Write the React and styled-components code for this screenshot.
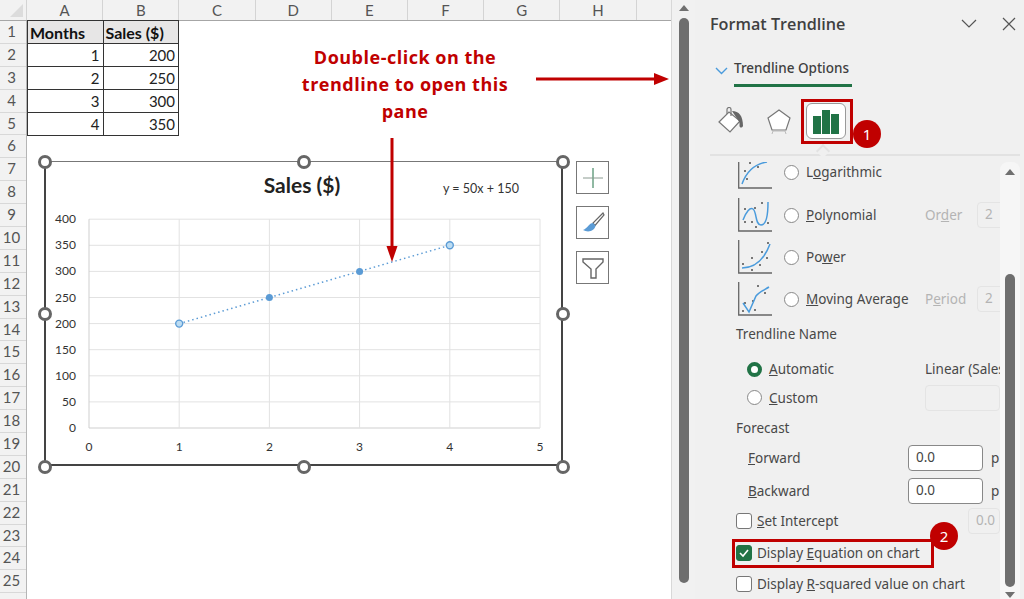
import React from 'react';
import styled, { createGlobalStyle } from 'styled-components';

const GlobalStyle = createGlobalStyle`
  html, body {
    margin: 0;
    padding: 0;
    background: #fff;
    overflow: hidden;
  }
`;

const Page = styled.div`
  display: flex;
  width: 1024px;
  height: 599px;
  overflow: hidden;
`;

/* ---------- sheet ---------- */

const Sheet = styled.div`
  position: relative;
  width: 672px;
  height: 599px;
  flex: none;
  overflow: hidden;
  background: #fff;
  border-right: 1px solid #d8d8d8;
  box-sizing: border-box;
  font-family: Lato, "Liberation Sans", sans-serif;
`;

const ColumnHeader = styled.div`
  display: flex;
  height: 21px;
  background: #f2f2f2;
  border-bottom: 1px solid #a6a6a6;
  box-sizing: border-box;
`;

const Corner = styled.div`
  width: 27px;
  flex: none;
  border-right: 1px solid #d4d4d4;
  box-sizing: border-box;
  position: relative;
  &::after {
    content: '';
    position: absolute;
    right: 3px;
    bottom: 3px;
    border-style: solid;
    border-width: 0 0 13px 13px;
    border-color: transparent transparent #dcdcdc transparent;
  }
`;

const ColumnLabel = styled.div`
  width: 76.2px;
  flex: none;
  box-sizing: border-box;
  border-right: 1px solid #d4d4d4;
  text-align: center;
  font-size: 15px;
  line-height: 20px;
  color: #555;
`;

const SheetBody = styled.div`
  display: flex;
  height: 578px;
`;

const RowHeader = styled.div`
  width: 27px;
  flex: none;
  background: #f2f2f2;
  border-right: 1px solid #b5b5b5;
  box-sizing: border-box;
`;

const RowLabel = styled.div`
  height: 22.9px;
  box-sizing: border-box;
  border-bottom: 1px solid #d8d8d8;
  text-align: center;
  padding-right: 3px;
  font-size: 15px;
  line-height: 21px;
  color: #555;
`;

const DataTable = styled.table`
  border-collapse: collapse;
  table-layout: fixed;
  width: 152px;
  height: 114px;
  align-self: flex-start;
  margin-top: -1px;
  font-size: 15px;
  color: #222;
`;

const HeadCell = styled.th`
  border: 1px solid #333;
  background: #e7e6e6;
  font-weight: 700;
  font-size: 16px;
  text-align: left;
  padding: 0 2px;
  height: 22px;
  color: #111;
`;

const DataCell = styled.td`
  border: 1px solid #333;
  text-align: right;
  padding: 0 3px;
  height: 22px;
`;

const Note = styled.div`
  position: absolute;
  left: 285px;
  top: 44px;
  width: 240px;
  text-align: center;
  font-family: "Open Sans", sans-serif;
  font-weight: 700;
  font-size: 18px;
  letter-spacing: 0.5px;
  line-height: 27px;
  color: #c00000;
`;

const ArrowLayer = styled.svg`
  position: absolute;
  left: 0;
  top: 0;
  pointer-events: none;
`;

/* ---------- chart ---------- */

const ChartFrame = styled.div`
  position: absolute;
  left: 44px;
  top: 161px;
  width: 519px;
  height: 305px;
  box-sizing: border-box;
  background: #fff;
  border: 2px solid #444;
  border-top: 1px solid #777;
`;

const ChartText = styled.text`
  font-family: Lato, "Liberation Sans", sans-serif;
  font-size: ${(p) => p.$size || 12}px;
  font-weight: ${(p) => (p.$bold ? 700 : 400)};
  fill: ${(p) => (p.$bold ? '#222' : '#333')};
  text-anchor: ${(p) => p.$anchor || 'middle'};
`;

const Handle = styled.span`
  position: absolute;
  left: ${(p) => p.$x - 7}px;
  top: ${(p) => p.$y - 7}px;
  width: 14px;
  height: 14px;
  box-sizing: border-box;
  border: 3px solid #666;
  border-radius: 50%;
  background: #fff;
`;

const ChartTools = styled.div`
  position: absolute;
  left: 576px;
  top: 161px;
  display: flex;
  flex-direction: column;
  gap: 12px;
`;

const ToolButton = styled.div`
  width: 33px;
  height: 33px;
  box-sizing: border-box;
  border: 1px solid #777;
  background: #fff;
  display: flex;
  align-items: center;
  justify-content: center;
`;

/* ---------- scrollbars ---------- */

const OuterScroll = styled.div`
  width: 23px;
  flex: none;
  background: #f1f1f1;
  display: flex;
  flex-direction: column;
  align-items: center;
  padding-top: 5px;
  box-sizing: border-box;
`;

const ArrowUp = styled.div`
  width: 0;
  height: 0;
  border-left: 5px solid transparent;
  border-right: 5px solid transparent;
  border-bottom: 6px solid #707070;
`;

const ArrowDown = styled.div`
  width: 0;
  height: 0;
  border-left: 5px solid transparent;
  border-right: 5px solid transparent;
  border-top: 6px solid #707070;
`;

const Thumb = styled.div`
  width: 10px;
  border-radius: 5px;
  background: #6e6e6e;
  height: ${(p) => p.$h}px;
  margin-top: ${(p) => p.$top}px;
  flex: none;
`;

/* ---------- format pane ---------- */

const Pane = styled.div`
  position: relative;
  width: 329px;
  flex: none;
  height: 599px;
  overflow: hidden;
  background: #f0f0f0;
  font-family: "Noto Sans", "Open Sans", sans-serif;
  font-size: 13.5px;
  color: #484848;
  display: flex;
  flex-direction: column;
`;

const PaneHeader = styled.div`
  height: 48px;
  flex: none;
  display: flex;
  align-items: center;
  padding: 0 8px 0 15px;
  gap: 25px;
`;

const PaneTitle = styled.div`
  flex: 1;
  font-family: "Open Sans", sans-serif;
  font-size: 16.2px;
  font-weight: 600;
  color: #404040;
`;

const SectionTab = styled.div`
  height: 40px;
  flex: none;
  display: flex;
  align-items: flex-start;
  padding: 2px 0 0 18px;
  box-sizing: border-box;
  gap: 8px;
`;

const SectionLabel = styled.div`
  width: 118px;
  height: 37px;
  box-sizing: border-box;
  border-bottom: 3px solid #217346;
  font-weight: 500;
  font-size: 13.5px;
  line-height: 36px;
  white-space: nowrap;
  color: #404040;
`;

const IconTabs = styled.div`
  height: 68px;
  flex: none;
  display: flex;
  align-items: center;
  gap: 21px;
  box-sizing: border-box;
  border-bottom: 2px solid #e2e2e2;
  margin: 0 4px 0 15px;
  padding-left: 7px;
  position: relative;
`;

const Notch = styled.span`
  position: absolute;
  left: 108px;
  bottom: -2px;
  width: 10px;
  height: 10px;
  box-sizing: border-box;
  background: #f0f0f0;
  border-left: 2px solid #e2e2e2;
  border-top: 2px solid #e2e2e2;
  transform: rotate(45deg);
  transform-origin: center;
`;

const ActiveTab = styled.div`
  width: 40px;
  height: 36px;
  margin-left: -7px;
  box-sizing: border-box;
  background: #fff;
  border: 1px solid #999;
  border-radius: 6px;
  display: flex;
  align-items: center;
  justify-content: center;
`;

const ScrollArea = styled.div`
  flex: 1;
  display: flex;
  margin-top: 6px;
  min-height: 0;
`;

const Options = styled.div`
  width: 305px;
  flex: none;
  overflow: hidden;
  box-sizing: border-box;
  padding-left: 41px;
`;

const InnerScroll = styled.div`
  width: 20px;
  flex: none;
  background: #f6f6f6;
  border-radius: 8px 8px 0 0;
  display: flex;
  flex-direction: column;
  align-items: center;
  padding-top: 7px;
`;

const Row = styled.div`
  display: flex;
  align-items: center;
  height: ${(p) => p.$h}px;
  white-space: nowrap;
  margin-left: ${(p) => p.$indent || 0}px;
  margin-top: ${(p) => p.$top || 0}px;
`;

const TrendSvg = styled.svg`
  width: 34px;
  height: 34px;
  flex: none;
  margin-left: 2px;
  margin-right: 12px;
`;

const RadioDot = styled.span`
  width: 15px;
  height: 15px;
  box-sizing: border-box;
  flex: none;
  border-radius: 50%;
  background: #fff;
  border: ${(p) => (p.$on ? '4px solid #217346' : '1px solid #888')};
  margin-right: 7px;
`;

const TrendLabel = styled.span`
  width: 119px;
  flex: none;
`;

const Muted = styled.span`
  width: 52px;
  flex: none;
  color: #b4b4b4;
`;

const Spread = styled.span`
  flex: 1;
`;

const FieldBox = styled.span`
  flex: none;
  box-sizing: border-box;
  height: 26px;
  width: ${(p) => p.$w}px;
  border-radius: 4px;
  border: 1px solid ${(p) => (p.$off ? '#e4e4e4' : '#888')};
  background: ${(p) => (p.$off ? '#f0f0f0' : '#fff')};
  color: ${(p) => (p.$off ? '#b4b4b4' : '#444')};
  padding-left: 7px;
  line-height: 23px;
`;

const FieldLabel = styled.span`
  width: 160px;
  flex: none;
`;

const Unit = styled.span`
  margin-left: 8px;
`;

const ClippedValue = styled.span`
  width: 75px;
  overflow: hidden;
`;

const CheckBox = styled.span`
  width: 16px;
  height: 16px;
  flex: none;
  box-sizing: border-box;
  border-radius: 3px;
  border: 1px solid ${(p) => (p.$on ? '#217346' : '#777')};
  background: ${(p) => (p.$on ? '#217346' : '#fff')};
  margin-right: 5px;
  display: flex;
  align-items: center;
  justify-content: center;
`;

const RedBox = styled.div`
  position: absolute;
  left: ${(p) => p.$x}px;
  top: ${(p) => p.$y}px;
  width: ${(p) => p.$w}px;
  height: ${(p) => p.$h}px;
  box-sizing: border-box;
  border: 3px solid #c00000;
`;

const Badge = styled.div`
  position: absolute;
  left: ${(p) => p.$x - 14}px;
  top: ${(p) => p.$y - 14}px;
  width: 28px;
  height: 28px;
  border-radius: 50%;
  background: #c00000;
  color: #fff;
  font-size: 15px;
  line-height: 28px;
  text-align: center;
`;

const columns = ['A', 'B', 'C', 'D', 'E', 'F', 'G', 'H', ''];
const rows = Array.from({ length: 25 }, (_, i) => i + 1);
const sales = [
  [1, 200],
  [2, 250],
  [3, 300],
  [4, 350],
];

// chart inner coordinates: frame border box starts at 44,161 with a 2/1px border
const px = (v) => 89 + 90.2 * v - 46;
const py = (v) => 428 - 0.522 * v - 162;

const trends = [
  {
    key: 'log',
    label: <>L<u>o</u>garithmic</>,
    curve: 'M4 29C8 18 16 9 29 7',
    dots: [[12, 8], [20, 12], [7, 16], [9, 24]],
    top: -11,
  },
  {
    key: 'poly',
    label: <><u>P</u>olynomial</>,
    side: <>Or<u>d</u>er</>,
    curve: 'M5 22C8 14 12 9 15 11C19 14 17 27 23 27C29 27 30 14 30 4',
    dots: [[7, 11], [24, 5], [17, 10], [7, 24], [14, 24], [18, 29], [30, 25]],
    top: 1,
  },
  {
    key: 'power',
    label: <>Po<u>w</u>er</>,
    curve: 'M4 28C16 28 26 20 32 4',
    dots: [[5, 24], [14, 18], [24, 12], [30, 3], [29, 18], [22, 25], [14, 30]],
  },
  {
    key: 'moving',
    label: <><u>M</u>oving Average</>,
    side: <>P<u>e</u>riod</>,
    curve: 'M5 21L11 30L18 14C21 10 26 8 31 5',
    dots: [[20, 4], [27, 11], [15, 19], [7, 21], [17, 28], [5, 29]],
  },
];

const TrendIcon = ({ curve, dots }) => (
  <TrendSvg viewBox="0 0 34 34">
    <path d="M0.7 0V33H34" fill="none" stroke="#666" strokeWidth="1.3" />
    {dots.map(([x, y]) => (
      <rect key={`${x}-${y}`} x={x - 1} y={y - 1} width="2" height="2" fill="#777" />
    ))}
    <path d={curve} fill="none" stroke="#4a9bdc" strokeWidth="1.5" />
  </TrendSvg>
);

const Chart = () => (
  <svg width="515" height="302" style={{ display: 'block' }}>
    {[0, 50, 100, 150, 200, 250, 300, 350, 400].map((v) => (
      <g key={v}>
        <line x1={px(0)} x2={px(5)} y1={py(v)} y2={py(v)} stroke={v === 0 ? '#cfcfcf' : '#e2e2e2'} />
        <ChartText x={px(0) - 13} y={py(v) + 4} $anchor="end">{v}</ChartText>
      </g>
    ))}
    {[0, 1, 2, 3, 4, 5].map((v) => (
      <g key={v}>
        <line x1={px(v)} x2={px(v)} y1={py(400)} y2={py(0)} stroke={v === 0 ? '#cfcfcf' : '#e2e2e2'} />
        <ChartText x={px(v)} y={py(0) + 23}>{v}</ChartText>
      </g>
    ))}
    <line
      x1={px(1)} y1={py(200)} x2={px(4)} y2={py(350)}
      stroke="#5b9bd5" strokeWidth="1.5" strokeDasharray="1.5 3"
    />
    <circle cx={px(1)} cy={py(200)} r="3.5" fill="#bcdcf2" stroke="#5b9bd5" strokeWidth="1.4" />
    <circle cx={px(2)} cy={py(250)} r="3.5" fill="#5b9bd5" />
    <circle cx={px(3)} cy={py(300)} r="3.5" fill="#5b9bd5" />
    <circle cx={px(4)} cy={py(350)} r="3.5" fill="#bcdcf2" stroke="#5b9bd5" strokeWidth="1.4" />
    <ChartText x={256} y={31} $size={21} $bold>Sales ($)</ChartText>
    <ChartText x={435} y={31} $size={12.5}>y = 50x + 150</ChartText>
  </svg>
);

const App = () => (
  <Page>
    <GlobalStyle />
    <Sheet>
      <ColumnHeader>
        <Corner />
        {columns.map((c) => (
          <ColumnLabel key={c}>{c}</ColumnLabel>
        ))}
      </ColumnHeader>
      <SheetBody>
        <RowHeader>
          {rows.map((r) => (
            <RowLabel key={r}>{r}</RowLabel>
          ))}
        </RowHeader>
        <DataTable>
          <thead>
            <tr>
              <HeadCell>Months</HeadCell>
              <HeadCell>Sales ($)</HeadCell>
            </tr>
          </thead>
          <tbody>
            {sales.map(([m, s]) => (
              <tr key={m}>
                <DataCell>{m}</DataCell>
                <DataCell>{s}</DataCell>
              </tr>
            ))}
          </tbody>
        </DataTable>
      </SheetBody>

      <ChartFrame>
        <Chart />
      </ChartFrame>
      {[
        [45, 162], [304, 162], [563, 162],
        [45, 314], [563, 314],
        [45, 467], [304, 467], [563, 467],
      ].map(([x, y]) => (
        <Handle key={`${x}-${y}`} $x={x} $y={y} />
      ))}
      <ChartTools>
        <ToolButton>
          <svg width="20" height="20" viewBox="0 0 20 20">
            <path d="M10 0V20" stroke="#217346" strokeWidth="1" />
            <path d="M0 10H20" stroke="#8a9a90" strokeWidth="1" />
          </svg>
        </ToolButton>
        <ToolButton>
          <svg width="24" height="24" viewBox="0 0 24 24">
            <path d="M22 2L12 12L14 14.5L23 4Z" fill="#fff" stroke="#666" strokeWidth="1.2" />
            <path d="M12 12C8 12 7 17 2 19C7 22 14 20 14.5 14.5Z" fill="#5b9bd5" />
          </svg>
        </ToolButton>
        <ToolButton>
          <svg width="24" height="24" viewBox="0 0 24 24">
            <path d="M2 3H22V6L15 13V22H10V13L2 6Z" fill="#fff" stroke="#666" strokeWidth="1.4" />
          </svg>
        </ToolButton>
      </ChartTools>

      <Note>
        Double-click on the<br />
        trendline to open this<br />
        pane
      </Note>
      <ArrowLayer width="672" height="599">
        <path d="M536 79H656" stroke="#c00000" strokeWidth="3" />
        <path d="M654 73L669 79L654 85Z" fill="#c00000" />
        <path d="M392 138V248" stroke="#c00000" strokeWidth="3" />
        <path d="M386.5 246H397.5L392 262Z" fill="#c00000" />
      </ArrowLayer>
    </Sheet>

    <OuterScroll>
      <ArrowUp />
      <Thumb $top={7} $h={565} />
    </OuterScroll>

    <Pane>
      <PaneHeader>
        <PaneTitle>Format Trendline</PaneTitle>
        <svg width="16" height="16" viewBox="0 0 16 16">
          <path d="M1 4L8 11L15 4" fill="none" stroke="#555" strokeWidth="1.2" />
        </svg>
        <svg width="14" height="14" viewBox="0 0 14 14">
          <path d="M1 1L13 13M13 1L1 13" fill="none" stroke="#555" strokeWidth="1.2" />
        </svg>
      </PaneHeader>

      <SectionTab>
        <svg width="14" height="38" viewBox="0 0 14 38" style={{ marginLeft: '2px', marginRight: '-3px' }}>
          <path d="M1 18L6.5 23.5L12 18" fill="none" stroke="#4a9bdc" strokeWidth="1.4" />
        </svg>
        <SectionLabel>Trendline Options</SectionLabel>
      </SectionTab>

      <IconTabs>
        <svg width="28" height="28" viewBox="0 0 28 28">
          <path d="M2 15L12 5L23 14L13 25Z" fill="#fff" stroke="#777" strokeWidth="1.2" />
          <path d="M10 7V2.5A2 2 0 0 1 14 2.5V9" fill="none" stroke="#777" strokeWidth="1.2" />
          <path d="M15 4C22 4 26 9 26 19C25 21 23 21 22.5 19C22.5 17 23 15 21 13Z" fill="#666" />
        </svg>
        <svg width="26" height="28" viewBox="0 0 26 28">
          <path d="M13 3L24 11L20 23H6L2 11Z" fill="#fff" stroke="#777" strokeWidth="1.2" />
          <path d="M6 27L7 24H19L20 27" fill="none" stroke="#bbb" strokeWidth="1" />
        </svg>
        <ActiveTab>
          <svg width="26" height="25" viewBox="0 0 26 25">
            <path d="M0 7H8V25H0ZM9 1H17V25H9ZM18 5H26V25H18Z" fill="#217346" />
          </svg>
        </ActiveTab>
        <Notch />
      </IconTabs>

      <ScrollArea>
        <Options>
          {trends.map((t) => (
            <Row key={t.key} $h={42} $top={t.top}>
              <TrendIcon curve={t.curve} dots={t.dots} />
              <RadioDot />
              <TrendLabel>{t.label}</TrendLabel>
              {t.side && (
                <>
                  <Muted>{t.side}</Muted>
                  <FieldBox $off $w={40}>2</FieldBox>
                </>
              )}
            </Row>
          ))}
          <Row $h={30} $top={-1}>Trendline Name</Row>
          <Row $h={28} $top={6} $indent={11}>
            <RadioDot $on />
            <span><u>A</u>utomatic</span>
            <Spread />
            <ClippedValue>Linear (Sales</ClippedValue>
          </Row>
          <Row $h={29} $indent={11}>
            <RadioDot />
            <span><u>C</u>ustom</span>
            <Spread />
            <FieldBox $off $w={75} />
          </Row>
          <Row $h={30} $top={1}>Forecast</Row>
          <Row $h={33} $top={-2} $indent={12}>
            <FieldLabel><u>F</u>orward</FieldLabel>
            <FieldBox $w={75}>0.0</FieldBox>
            <Unit>p</Unit>
          </Row>
          <Row $h={33} $indent={12}>
            <FieldLabel><u>B</u>ackward</FieldLabel>
            <FieldBox $w={75}>0.0</FieldBox>
            <Unit>p</Unit>
          </Row>
          <Row $h={28}>
            <CheckBox />
            <span><u>S</u>et Intercept</span>
            <Spread />
            <FieldBox $off $w={32}>0.0</FieldBox>
          </Row>
          <Row $h={32} $top={2}>
            <CheckBox $on>
              <svg width="12" height="12" viewBox="0 0 12 12">
                <path d="M2 6L5 9L10 3" fill="none" stroke="#fff" strokeWidth="1.6" />
              </svg>
            </CheckBox>
            <span>Display <u>E</u>quation on chart</span>
          </Row>
          <Row $h={30}>
            <CheckBox />
            <span>Display <u>R</u>-squared value on chart</span>
          </Row>
        </Options>
        <InnerScroll>
          <ArrowUp />
          <Thumb $top={99} $h={313} />
          <span style={{ height: '5px' }} />
          <ArrowDown />
        </InnerScroll>
      </ScrollArea>

      <RedBox $x={106} $y={99} $w={52} $h={45} />
      <Badge $x={172} $y={134}>1</Badge>
      <RedBox $x={37} $y={539} $w={202} $h={29} />
      <Badge $x={249} $y={536}>2</Badge>
    </Pane>
  </Page>
);

export default App;
